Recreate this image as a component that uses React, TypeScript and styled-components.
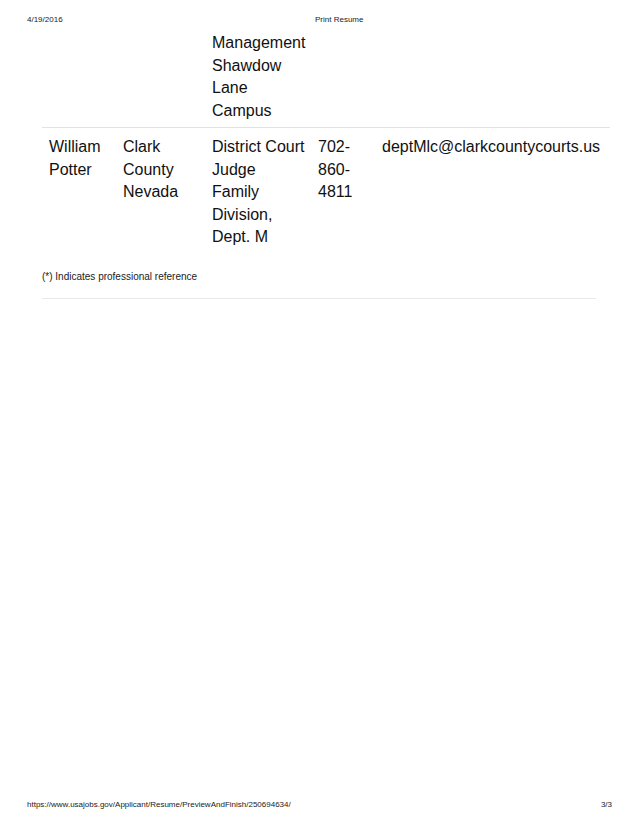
import React from "react";
import styled, { createGlobalStyle } from "styled-components";

const Global = createGlobalStyle`
  html, body { margin: 0; padding: 0; background: #fff; }
  body { font-family: "Liberation Sans", Arial, sans-serif; color: #000; }
`;

const Page = styled.div`
  width: 638px;
  height: 826px;
  display: flex;
  flex-direction: column;
  box-sizing: border-box;
  overflow: hidden;
`;

const PrintBar = styled.div`
  display: grid;
  grid-template-columns: 288px 1fr;
  padding: 15px 26px 0 27px;
  font-size: 8px;
  line-height: 10px;
  color: #222;
`;

const Table = styled.div`
  margin: 7px 0 0 42px;
  width: 568px;
  display: flex;
  flex-direction: column;
`;

const Row = styled.div<{ $last?: boolean }>`
  display: grid;
  grid-template-columns: 74px 89px 106px 64px 1fr;
  border-bottom: ${(p) => (p.$last ? "none" : "1px solid #e2e2e2")};
`;

const Cell = styled.div<{ $first?: boolean }>`
  padding: ${(p) => (p.$first ? "0 7px 5px" : "8px 7px 4px")};
  font-size: 16px;
  line-height: 22.5px;
  white-space: nowrap;
  color: #111;
`;

const Line = styled.div``;

const Note = styled.div`
  margin: 18px 0 0 42px;
  font-size: 10px;
  line-height: 12px;
  color: #222;
`;

const Divider = styled.hr`
  margin: 15px 0 0 42px;
  width: 554px;
  border: none;
  border-top: 1px solid #e8e8e8;
  height: 0;
`;

const Footer = styled.div`
  margin-top: auto;
  display: flex;
  justify-content: space-between;
  padding: 0 26px 16px 27px;
  font-size: 8px;
  line-height: 10px;
  color: #222;
`;

const rows: string[][][] = [
  [[], [], ["Management", "Shawdow", "Lane", "Campus"], [], []],
  [
    ["William", "Potter"],
    ["Clark", "County", "Nevada"],
    ["District Court", "Judge", "Family", "Division,", "Dept. M"],
    ["702-", "860-", "4811"],
    ["deptMlc@clarkcountycourts.us"],
  ],
];

export default function App() {
  return (
    <>
      <Global />
      <Page>
        <PrintBar>
          <span>4/19/2016</span>
          <span>Print Resume</span>
        </PrintBar>
        <Table>
          {rows.map((row, ri) => (
            <Row key={ri} $last={ri === rows.length - 1}>
              {row.map((cell, ci) => (
                <Cell key={ci} $first={ri === 0}>
                  {cell.map((l, li) => (
                    <Line key={li}>{l}</Line>
                  ))}
                </Cell>
              ))}
            </Row>
          ))}
        </Table>
        <Note>(*) Indicates professional reference</Note>
        <Divider />
        <Footer>
          <span>https://www.usajobs.gov/Applicant/Resume/PreviewAndFinish/250694634/</span>
          <span>3/3</span>
        </Footer>
      </Page>
    </>
  );
}
